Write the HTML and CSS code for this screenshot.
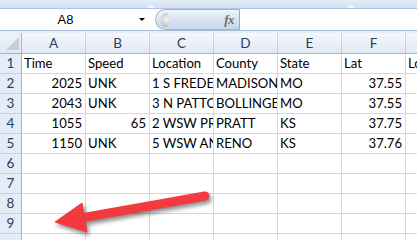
FILE: index.html
```html
<!DOCTYPE html>
<html>
<head>
<meta charset="utf-8">
<link rel="stylesheet" href="styles.css">
</head>
<body>
<div class="ribbon"><span class="notch n1"></span><span class="notch n2"></span></div>
<div class="fbar">
  <div class="namebox">A8</div>
  <div class="dd"><span class="tri"></span></div>
  <div class="pill"><span class="knob"></span><span class="fx">fx</span></div>
  <div class="input"></div>
</div>
<div class="gap"></div>
<div class="sheet">
  <div class="corner"><svg width="22" height="20" viewBox="0 0 22 20"><polygon points="19,4 19,17 6,17" fill="#c3cfdf"/></svg></div>
  <div class="ch">A</div><div class="ch">B</div><div class="ch">C</div><div class="ch">D</div><div class="ch">E</div><div class="ch">F</div><div class="ch">G</div>

  <div class="rh">1</div><div class="c">Time</div><div class="c">Speed</div><div class="c">Location</div><div class="c">County</div><div class="c">State</div><div class="c">Lat</div><div class="c">Lon</div>
  <div class="rh">2</div><div class="c n">2025</div><div class="c">UNK</div><div class="c">1 S FREDERICKTOWN</div><div class="c">MADISON</div><div class="c">MO</div><div class="c n">37.55</div><div class="c"></div>
  <div class="rh">3</div><div class="c n">2043</div><div class="c">UNK</div><div class="c">3 N PATTON</div><div class="c">BOLLINGER</div><div class="c">MO</div><div class="c n">37.55</div><div class="c"></div>
  <div class="rh">4</div><div class="c n">1055</div><div class="c n">65</div><div class="c">2 WSW PRATT</div><div class="c">PRATT</div><div class="c">KS</div><div class="c n">37.75</div><div class="c"></div>
  <div class="rh">5</div><div class="c n">1150</div><div class="c">UNK</div><div class="c">5 WSW ANDALE</div><div class="c">RENO</div><div class="c">KS</div><div class="c n">37.76</div><div class="c"></div>
  <div class="rh">6</div><div class="c"></div><div class="c"></div><div class="c"></div><div class="c"></div><div class="c"></div><div class="c"></div><div class="c"></div>
  <div class="rh">7</div><div class="c"></div><div class="c"></div><div class="c"></div><div class="c"></div><div class="c"></div><div class="c"></div><div class="c"></div>
  <div class="rh">8</div><div class="c"></div><div class="c"></div><div class="c"></div><div class="c"></div><div class="c"></div><div class="c"></div><div class="c"></div>
  <div class="rh">9</div><div class="c"></div><div class="c"></div><div class="c"></div><div class="c"></div><div class="c"></div><div class="c"></div><div class="c"></div>
  <div class="rh"></div><div class="c"></div><div class="c"></div><div class="c"></div><div class="c"></div><div class="c"></div><div class="c"></div><div class="c"></div>
</div>
<svg class="arrow" width="417" height="240" viewBox="0 0 417 240">
  <g class="arrowshape">
    <line x1="84" y1="217.5" x2="205" y2="196" stroke="#f23a3f" stroke-width="9" stroke-linecap="round"/>
    <polygon points="55,222 82,203 87,232" fill="#f23a3f" stroke="#f23a3f" stroke-width="1" stroke-linejoin="round"/>
  </g>
</svg>
</body>
</html>
```

FILE: styles.css
```css
body {
  margin: 0;
  width: 417px;
  height: 240px;
  overflow: hidden;
  position: relative;
  background: #ffffff;
  font-family: Lato, "Liberation Sans", sans-serif;
}

.ribbon {
  height: 8px;
  background: linear-gradient(#e2ecf8, #d3e1f2);
  border-bottom: 1px solid #b2c6df;
  display: flex;
}

.notch {
  width: 0;
  height: 0;
  border-left: 4px solid transparent;
  border-right: 4px solid transparent;
  border-bottom: 4px solid #eef4fb;
  align-self: flex-end;
}

.n1 { margin-left: 147px; }
.n2 { margin-left: 192px; }

.fbar {
  display: flex;
  height: 21px;
  border-bottom: 1px solid #a9bcd6;
}

.namebox {
  width: 131px;
  display: flex;
  align-items: center;
  justify-content: center;
  font-family: "Liberation Sans", Arial, sans-serif;
  font-size: 13px;
  color: #000;
}

.dd {
  width: 24px;
  display: flex;
  align-items: center;
  justify-content: center;
}

.tri {
  width: 0;
  height: 0;
  border-left: 3px solid transparent;
  border-right: 3px solid transparent;
  border-top: 3px solid #000;
  margin-left: -3px;
}

.pill {
  width: 85px;
  box-sizing: border-box;
  border: 1px solid #a2b5cf;
  border-right-color: #93a9c7;
  border-radius: 11px 0 0 11px;
  background: linear-gradient(#f0f5fb, #d6e2f1 55%, #c8d7eb);
  display: flex;
  align-items: center;
  justify-content: space-between;
  padding: 0 5px 0 5px;
}

.knob {
  width: 9px;
  height: 14px;
  border-radius: 50%;
  background: radial-gradient(circle at 60% 45%, #f4f4f4 0%, #d2d2d2 55%, #9d9d9d 100%);
}

.fx {
  font-family: "Liberation Serif", serif;
  font-style: italic;
  font-weight: bold;
  font-size: 13px;
  color: #6f6f6f;
  letter-spacing: -0.5px;
}

.input {
  flex: 1;
  background: #fff;
}

.gap {
  height: 2px;
  background: #e8eef7;
}

.sheet {
  display: grid;
  grid-template-columns: 22px repeat(7, 64px);
  grid-template-rows: 21px;
  grid-auto-rows: 20px;
}

.corner {
  background: linear-gradient(#eef3f9, #dfe7f2);
  border-right: 1px solid #9eb6ce;
  border-bottom: 1px solid #9eb6ce;
  box-sizing: border-box;
}

.corner svg { display: block; }

.ch {
  background: linear-gradient(#f5f8fc, #e2e9f4);
  border-right: 1px solid #c3d0e1;
  border-bottom: 1px solid #9eb6ce;
  box-sizing: border-box;
  text-align: center;
  font-size: 13.5px;
  line-height: 20px;
  color: #27415f;
}

.rh {
  background: #e4ecf7;
  border-right: 1px solid #9eb6ce;
  border-bottom: 1px solid #c5d2e3;
  box-sizing: border-box;
  text-align: center;
  font-size: 13.5px;
  line-height: 19px;
  color: #27415f;
}

.c {
  border-right: 1px solid #d0d7e5;
  border-bottom: 1px solid #d0d7e5;
  box-sizing: border-box;
  padding: 0 3px 0 2px;
  font-size: 13.1px;
  line-height: 19px;
  white-space: nowrap;
  overflow: hidden;
  color: #000;
}

.n { text-align: right; }

.arrow {
  position: absolute;
  left: 0;
  top: 0;
  pointer-events: none;
}

.arrowshape {
  filter: drop-shadow(2px 3px 2px rgba(0, 0, 0, 0.45));
}
```
